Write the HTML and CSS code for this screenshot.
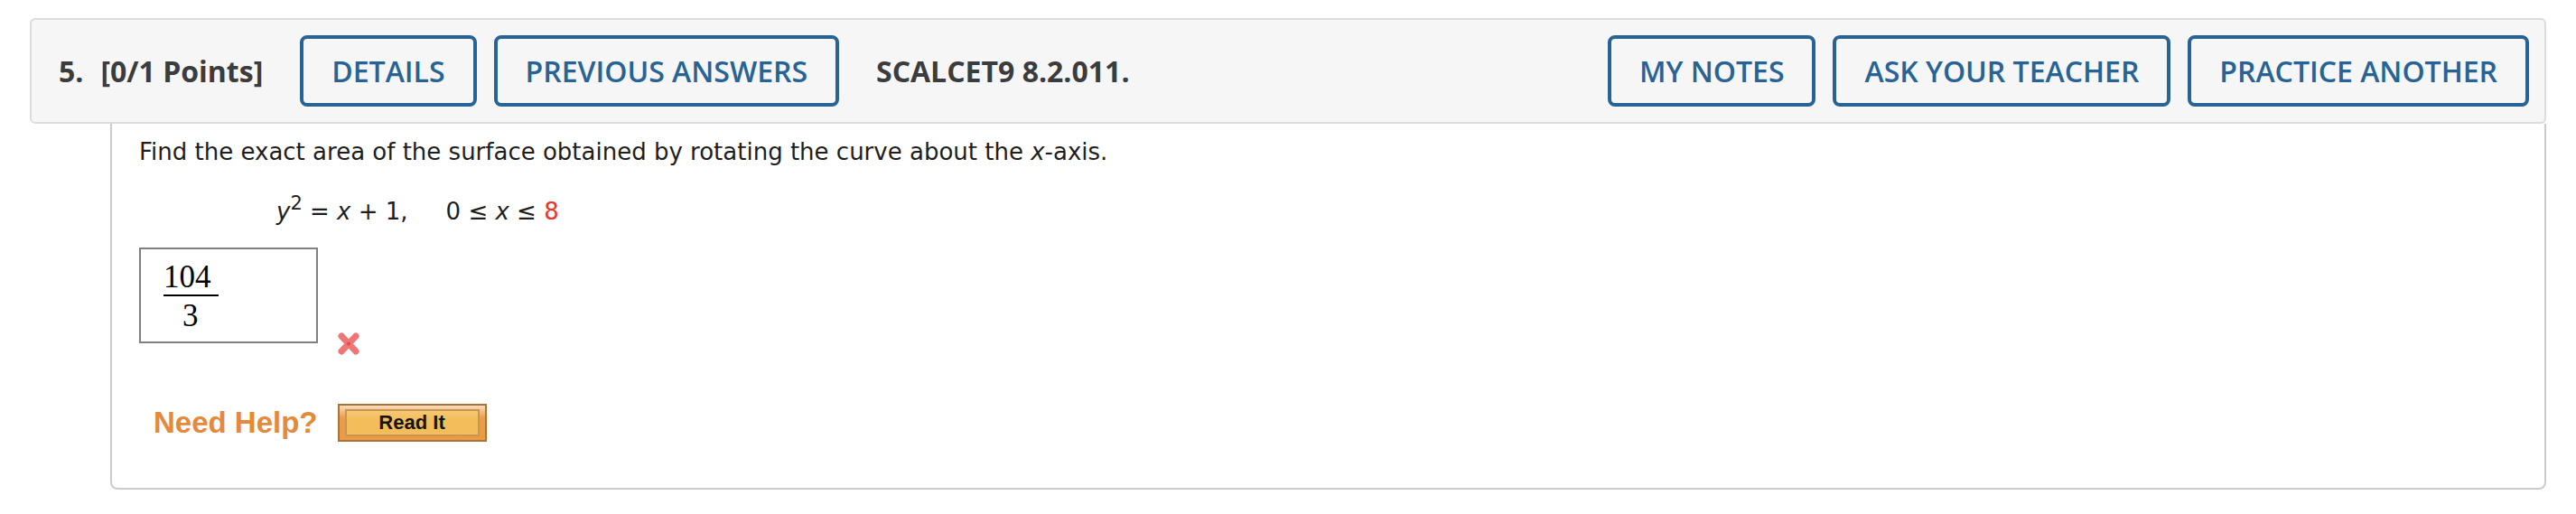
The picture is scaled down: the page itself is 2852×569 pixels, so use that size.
FILE: index.html
```html
<!DOCTYPE html>
<html lang="en">
<head>
    <meta charset="UTF-8">
    <title>Question 5</title>
    <link rel="stylesheet" href="styles.css">
</head>
<body>
    <div class="question">
        <div class="q-header">
            <span class="q-num">5.</span>
            <span class="q-points">[0/1 Points]</span>
            <button class="hdr-btn">DETAILS</button>
            <button class="hdr-btn">PREVIOUS ANSWERS</button>
            <span class="q-code">SCALCET9 8.2.011.</span>
            <div class="hdr-right">
                <button class="hdr-btn">MY NOTES</button>
                <button class="hdr-btn">ASK YOUR TEACHER</button>
                <button class="hdr-btn">PRACTICE ANOTHER</button>
            </div>
        </div>

        <div class="q-body">
            <p class="prompt">Find the exact area of the surface obtained by rotating the curve about the <i>x</i>-axis.</p>

            <div class="equation">
                <i>y</i><sup>2</sup> = <i>x</i> + 1,<span class="range">0 ≤ <i>x</i> ≤ <span class="given">8</span></span>
            </div>

            <div class="answer-row">
                <div class="answer-box">
                    <span class="frac">
                        <span class="frac-num">104</span>
                        <span class="frac-den">3</span>
                    </span>
                </div>
                <!-- wrong answer mark -->
                <svg class="wrong" width="26" height="27" viewBox="0 0 26 27">
                    <path d="M5 5 L21 22 M21 5 L5 22" stroke="#ec6765" stroke-width="7" stroke-linecap="round" fill="none" opacity="0.9"/>
                    <circle cx="13" cy="13.5" r="2" fill="#e24c4a"/>
                </svg>
            </div>

            <div class="help-row">
                <span class="need-help">Need Help?</span>
                <button class="read-it"><span>Read It</span></button>
            </div>
        </div>
    </div>
</body>
</html>
```

FILE: styles.css
```css
html, body {
    margin: 0;
    background-color: #fff;
}

body {
    padding: 20px 33px 0;
}

.q-header {
    display: flex;
    align-items: center;
    gap: 19px;
    padding: 17px 17px 17px 30px;
    background-color: #f6f6f6;
    border: 2px solid #dcdcdc;
    border-radius: 6px;
    font-family: 'Open Sans', sans-serif;
    color: #3c3c3c;
}

.q-num,
.q-points,
.q-code {
    font-size: 32px;
    font-weight: 700;
}

.q-points {
    margin-right: 22px;
}

.q-code {
    margin-left: 22px;
}

.hdr-right {
    display: flex;
    gap: 19px;
    margin-left: auto;
}

.hdr-btn {
    height: 79px;
    padding: 0 31px;
    box-sizing: border-box;
    background: transparent;
    border: 4px solid #276394;
    border-radius: 8px;
    font-family: 'Open Sans', sans-serif;
    font-size: 32px;
    font-weight: 600;
    color: #276394;
    cursor: pointer;
}

.q-body {
    margin-left: 89px;
    padding: 16px 30px 51px;
    border: 2px solid #cccccc;
    border-top: none;
    border-radius: 0 0 8px 8px;
    font-family: 'DejaVu Sans', Verdana, sans-serif;
    font-size: 26px;
    line-height: 30px;
    color: #1e1e1e;
}

.prompt {
    margin: 0;
}

.equation {
    margin-top: 36px;
    padding-left: 152px;
}

.equation sup {
    font-size: 21px;
    line-height: 0;
    vertical-align: 11px;
}

.range {
    margin-left: 42px;
}

.given {
    color: #e8362b;
}

.answer-row {
    display: flex;
    align-items: flex-end;
    margin-top: 25px;
}

.answer-box {
    width: 198px;
    height: 106px;
    box-sizing: border-box;
    padding: 13px 0 0 25px;
    border: 2px solid #808080;
    background: #fff;
}

.frac {
    display: inline-flex;
    flex-direction: column;
    align-items: center;
    font-family: 'Liberation Serif', 'Times New Roman', serif;
    font-size: 35px;
    line-height: 35px;
    color: #000;
}

.frac-num {
    padding-right: 8px;
    padding-bottom: 2px;
    border-bottom: 2px solid #000;
}

.frac-num,
.frac-den {
    display: block;
}

.frac-den {
    margin-top: 4px;
    margin-left: -1px;
}

.wrong {
    margin-left: 21px;
    margin-bottom: -14px;
}

.help-row {
    display: flex;
    align-items: center;
    margin-top: 67px;
    padding-left: 16px;
}

.need-help {
    font-family: 'Liberation Sans', Arial, sans-serif;
    font-size: 33px;
    font-weight: 700;
    line-height: 38px;
    color: #e5893a;
}

.read-it {
    margin-left: 22px;
    width: 165px;
    height: 42px;
    padding: 4px 6px;
    box-sizing: border-box;
    border: 2px solid #a9743a;
    background: linear-gradient(#f8dcbd, #ec9d4b 35%, #eb9a46);
    cursor: pointer;
}

.read-it span {
    display: block;
    height: 100%;
    box-sizing: border-box;
    border: 2px solid #c89650;
    background: linear-gradient(#f6c873, #f2bd5a 40%);
    font-family: 'Liberation Sans', Arial, sans-serif;
    font-size: 22px;
    font-weight: 700;
    line-height: 26px;
    color: #141414;
}
```
